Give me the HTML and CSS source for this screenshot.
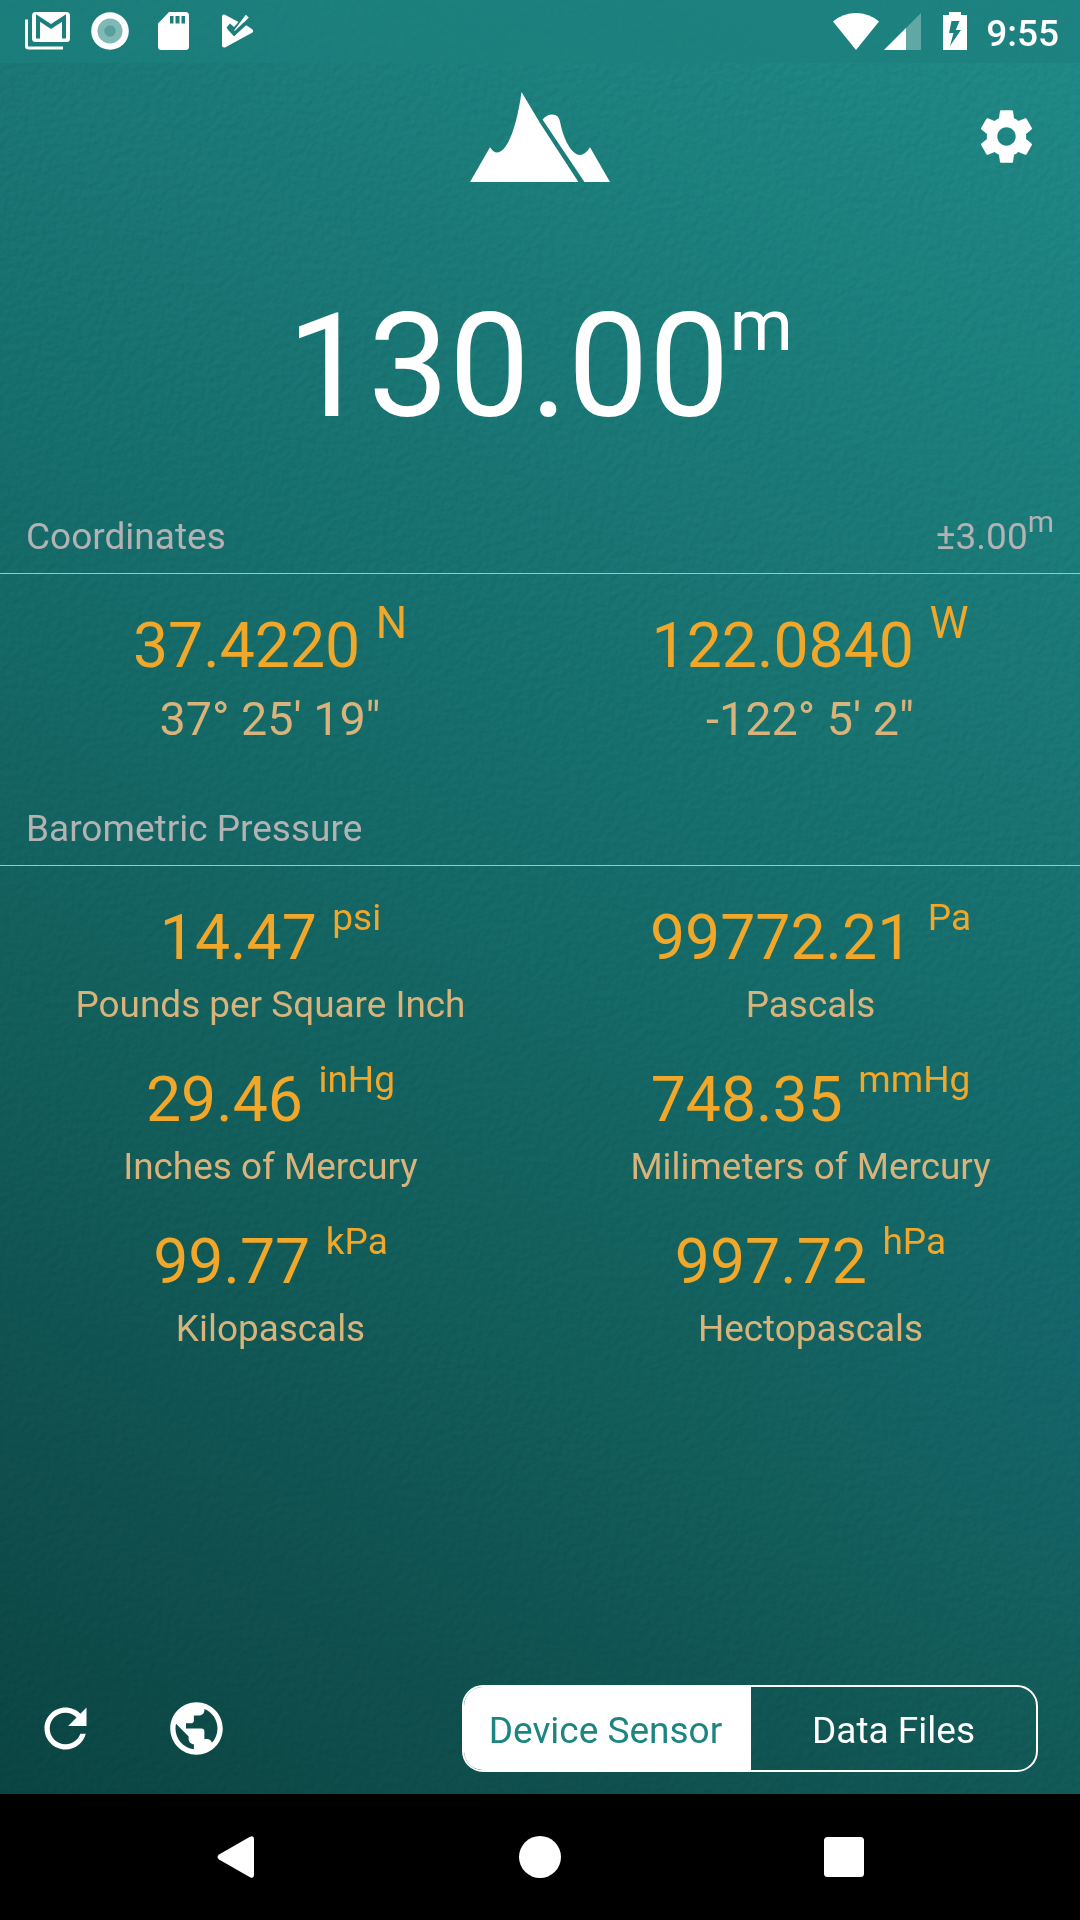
FILE: index.html
```html
<!DOCTYPE html>
<html lang="en">

<head>
    <meta charset="utf-8">
    <title>Altimeter</title>
    <link rel="stylesheet" href="styles.css">
</head>

<body>
    <div class="screen">
        <!-- paper grain over the gradient -->
        <svg class="grain" width="1080" height="1794">
            <filter id="paper" x="0" y="0" width="100%" height="100%" color-interpolation-filters="sRGB">
                <feTurbulence type="fractalNoise" baseFrequency="0.15" numOctaves="2" seed="4" result="noise" />
                <feDiffuseLighting in="noise" surfaceScale="1.4" diffuseConstant="0.72" lighting-color="#ffffff">
                    <feDistantLight azimuth="235" elevation="44" />
                </feDiffuseLighting>
            </filter>
            <rect width="1080" height="1794" filter="url(#paper)" />
        </svg>

        <div class="status-bar">
            <div class="status-left">
                <svg class="icon-mail" width="45" height="38" viewBox="0 0 45 38">
                    <path fill="none" stroke="#fff" stroke-width="3" d="M1.5 7.5V34a2 2 0 0 0 2 2H38" />
                    <rect x="7" y="0" width="38" height="30" rx="3.5" fill="#fff" />
                    <path fill="none" stroke="#1d7f7c" stroke-width="4" d="M13 26.500V6L26 14.500L39 6V26.500" />
                </svg>
                <svg class="icon-circle" width="38" height="38" viewBox="0 0 38 38">
                    <circle cx="19" cy="19" r="18.800" fill="#fff" />
                    <circle cx="19" cy="19" r="12.500" fill="#7fb8b5" />
                    <circle cx="19" cy="19" r="5.700" fill="#57a09c" />
                </svg>
                <svg class="icon-sd" width="31" height="38" viewBox="0 0 31 38">
                    <path fill="#fff" fill-rule="evenodd" d="M11 0H27.500A3.500 3.500 0 0 1 31 3.500V34.500A3.500 3.500 0 0 1 27.500 38H3.500A3.500 3.500 0 0 1 0 34.500V11.500ZM12 4V11.500H15.500V4ZM17.500 4V11.500H21.500V4ZM23.500 4V11.500H27V4Z" />
                </svg>
                <svg class="icon-play" width="32" height="34" viewBox="0 0 32 34">
                    <path fill="#fff" d="M0 2.500Q0 0 2.500 .5L16.500 8L12 13L8 9.500L4.500 13.500L12 22L24 11L30.500 15.500Q32 17 30.500 18.500L3 33.500Q0 34 0 31.500Z" />
                    <path fill="#fff" d="M12 16.500L23.800 .8L26.800 3.500L13.500 17.500Z" />
                    <path fill="none" stroke="#1d7f7c" stroke-width="3.500" d="M6.500 13.800L12.200 19.800L23.500 9.200" />
                </svg>
            </div>
            <div class="status-right">
                <svg class="icon-wifi" width="46" height="37" viewBox="0 0 46 37">
                    <path fill="#fff" d="M0 8.500Q10 0 23 0T46 8.500L23 37Z" />
                </svg>
                <svg class="icon-signal" width="37" height="37" viewBox="0 0 37 37">
                    <path fill="#fff" fill-opacity=".3" d="M37 0V37H0Z" />
                    <path fill="#fff" d="M22 15V37H0Z" />
                </svg>
                <svg class="icon-battery" width="24" height="38" viewBox="0 0 24 38">
                    <path fill="#fff" fill-rule="evenodd" d="M6 0H18V3H24V38H0V3H6ZM8.500 9L6 21H10.500L7 34L18 18H12.800L16.500 9Z" />
                </svg>
                <span class="clock">9:55</span>
            </div>
        </div>

        <header class="header">
            <svg class="logo" width="140" height="90" viewBox="0 0 140 90">
                <path fill="#fff" d="M0 90L20 55.300Q23.500 60.500 27 60.500C36 60.500 46 40 51.500 0L70 31L108.400 90Z" />
                <path fill="#fff" d="M72.500 27.500Q77 22.500 82 22.500C88 22.500 89.500 26 91 34C95 51 103 63 110 63Q115 63 120 55.300L140 90H114.500Z" />
            </svg>
            <svg class="settings" width="63" height="63" viewBox="0 0 24 24">
                <path fill="#fff" d="M19.430 12.980c.04-.32.07-.64.07-.98s-.03-.66-.07-.98l2.110-1.650c.19-.15.24-.42.12-.64l-2-3.460c-.12-.22-.39-.3-.61-.22l-2.490 1c-.52-.4-1.080-.73-1.690-.98l-.38-2.650C14.460 2.180 14.250 2 14 2h-4c-.25 0-.46.18-.49.42l-.38 2.650c-.61.25-1.170.59-1.690.98l-2.490-1c-.23-.09-.49 0-.61.22l-2 3.460c-.13.22-.07.49.12.64l2.110 1.650c-.04.32-.07.65-.07.98s.03.66.07.98l-2.110 1.650c-.19.15-.24.42-.12.64l2 3.460c.12.22.39.3.61.22l2.490-1c.52.4 1.080.73 1.690.98l.38 2.650c.03.24.24.42.49.42h4c.25 0 .46-.18.49-.42l.38-2.650c.61-.25 1.170-.59 1.690-.98l2.490 1c.23.09.49 0 .61-.22l2-3.460c.12-.22.07-.49-.12-.64l-2.110-1.650zM12 15.500c-1.930 0-3.500-1.570-3.500-3.500s1.570-3.500 3.500-3.500 3.500 1.570 3.500 3.500-1.570 3.500-3.500 3.500z" />
            </svg>
        </header>

        <div class="altitude">130.00<sup>m</sup></div>

        <section class="section">
            <div class="section-title">
                <span>Coordinates</span>
                <span class="accuracy">±3.00<sup>m</sup></span>
            </div>
            <div class="grid coordinates">
                <div class="cell">
                    <div class="value">37.4220 <sup>N</sup></div>
                    <div class="dms">37° 25' 19"</div>
                </div>
                <div class="cell">
                    <div class="value">122.0840 <sup>W</sup></div>
                    <div class="dms">-122° 5' 2"</div>
                </div>
            </div>
        </section>

        <section class="section">
            <div class="section-title">
                <span>Barometric Pressure</span>
            </div>
            <div class="grid pressure">
                <div class="cell">
                    <div class="value">14.47 <sup>psi</sup></div>
                    <div class="label">Pounds per Square Inch</div>
                </div>
                <div class="cell">
                    <div class="value">99772.21 <sup>Pa</sup></div>
                    <div class="label">Pascals</div>
                </div>
                <div class="cell">
                    <div class="value">29.46 <sup>inHg</sup></div>
                    <div class="label">Inches of Mercury</div>
                </div>
                <div class="cell">
                    <div class="value">748.35 <sup>mmHg</sup></div>
                    <div class="label">Milimeters of Mercury</div>
                </div>
                <div class="cell">
                    <div class="value">99.77 <sup>kPa</sup></div>
                    <div class="label">Kilopascals</div>
                </div>
                <div class="cell">
                    <div class="value">997.72 <sup>hPa</sup></div>
                    <div class="label">Hectopascals</div>
                </div>
            </div>
        </section>

        <footer class="footer">
            <div class="actions">
                <svg width="63" height="63" viewBox="0 0 24 24">
                    <path fill="#fff" d="M17.650 6.350C16.200 4.900 14.210 4 12 4c-4.420 0-7.990 3.580-7.990 8s3.570 8 7.990 8c3.730 0 6.840-2.550 7.730-6h-2.080c-.82 2.330-3.040 4-5.650 4-3.310 0-6-2.690-6-6s2.690-6 6-6c1.660 0 3.140.69 4.220 1.780L13 11h7V4l-2.350 2.350z" />
                </svg>
                <svg width="63" height="63" viewBox="0 0 24 24">
                    <path fill="#fff" d="M12 2C6.480 2 2 6.480 2 12s4.480 10 10 10 10-4.480 10-10S17.520 2 12 2zm-1 17.930c-3.950-.49-7-3.850-7-7.930 0-.62.08-1.210.21-1.790L9 15v1c0 1.100.9 2 2 2v1.930zm6.900-2.540c-.26-.81-1-1.390-1.900-1.390h-1v-3c0-.55-.45-1-1-1H8v-2h2c.55 0 1-.45 1-1V7h2c1.100 0 2-.9 2-2v-.41c2.930 1.190 5 4.060 5 7.410 0 2.080-.8 3.970-2.100 5.390z" />
                </svg>
            </div>
            <div class="switch">
                <div class="option active">Device Sensor</div>
                <div class="option">Data Files</div>
            </div>
        </footer>
    </div>

    <nav class="nav-bar">
        <svg width="38" height="42" viewBox="0 0 38 42">
            <path fill="#fff" d="M2 18.500L33 .8Q37 -1 37 3V39Q37 43 33 41.200L2 23.500Q-1 21 2 18.500Z" />
        </svg>
        <svg width="42" height="42" viewBox="0 0 42 42">
            <circle cx="21" cy="21" r="21" fill="#fff" />
        </svg>
        <svg width="40" height="40" viewBox="0 0 40 40">
            <rect width="40" height="40" rx="3.500" fill="#fff" />
        </svg>
    </nav>
</body>

</html>
```
FILE: styles.css
```css
body {
    margin: 0;
    background-color: #000;
    font-family: Roboto, sans-serif;
    color: #fff;
}

svg {
    display: block;
}

sup {
    line-height: 0;
    vertical-align: baseline;
    position: relative;
}

.screen {
    position: relative;
    display: flex;
    flex-direction: column;
    width: 1080px;
    height: 1794px;
    background:
        radial-gradient(circle at 1100px 1360px, rgba(20, 100, 115, 0.35), rgba(20, 100, 115, 0) 400px),
        linear-gradient(211deg, #208986 0%, #1c807d 16%, #197674 30%, #146967 50%, #125d5a 68%, #0f514f 83%, #0a4442 100%);
}

.grain {
    position: absolute;
    top: 0;
    left: 0;
    mix-blend-mode: overlay;
    opacity: 0.1;
}

/* status bar */
.status-bar {
    position: relative;
    display: flex;
    justify-content: space-between;
    height: 63px;
    background: rgba(29, 128, 125, 0.7);
}

.status-left {
    display: flex;
    align-items: flex-start;
    padding: 12px 0 0 25px;
}

.icon-circle {
    margin-left: 21px;
    overflow: visible;
}

.icon-sd {
    margin-left: 29px;
}

.icon-play {
    margin: 2px 0 0 33px;
}

.status-right {
    display: flex;
    align-items: flex-start;
    padding: 13px 21px 0 0;
}

.icon-signal {
    margin-left: 5px;
}

.icon-battery {
    margin: -1px 0 0 22px;
}

.clock {
    margin: -1px 0 0 19px;
    font-size: 37px;
    font-weight: 500;
    line-height: 43px;
}

/* header */
.header {
    position: relative;
    display: flex;
    justify-content: flex-end;
    height: 217px;
}

.logo {
    position: absolute;
    top: 29px;
    left: 470px;
}

.settings {
    margin: 42px 42px 0 0;
}

.altitude {
    position: relative;
    height: 219px;
    padding-top: 2px;
    font-size: 144px;
    line-height: 170px;
    text-align: center;
}

.altitude sup {
    top: -66px;
    font-size: 72px;
}

/* sections */
.section {
    position: relative;
    height: 292px;
}

.section-title {
    display: flex;
    justify-content: space-between;
    height: 72px;
    padding: 0 26px;
    border-bottom: 1px solid #b5bdbc;
    font-size: 37px;
    line-height: 72px;
    color: #b3b3b3;
}

.accuracy sup {
    top: -17px;
    font-size: 30px;
}

.grid {
    display: grid;
    grid-template-columns: 1fr 1fr;
    padding-top: 35px;
}

.cell {
    height: 162px;
    text-align: center;
}

.value {
    height: 74px;
    font-size: 62.5px;
    line-height: 74px;
    color: #f1a729;
}

.value sup {
    top: -29px;
    font-size: 37px;
}

.pressure .cell {
    padding-left: 1px;
}

.coordinates .value sup {
    font-size: 44px;
}

.dms {
    font-size: 46.7px;
    line-height: 56px;
    padding-top: 8px;
    color: #d8b37b;
}

.label {
    font-size: 36.9px;
    line-height: 44px;
    padding-top: 8px;
    color: #d8b37b;
}

/* footer */
.footer {
    position: relative;
    display: flex;
    justify-content: space-between;
    align-items: center;
    height: 87px;
    margin-top: auto;
    padding: 0 42px 22px 34px;
}

.actions {
    display: flex;
    gap: 68px;
}

.switch {
    box-sizing: border-box;
    display: flex;
    width: 576px;
    height: 87px;
    border: 2px solid #fff;
    border-radius: 21px;
    overflow: hidden;
}

.option {
    flex: 1;
    font-size: 37px;
    line-height: 87px;
    text-align: center;
}

.option.active {
    flex: 0 0 283px;
    padding-right: 4px;
    background: #fff;
    color: #1d8581;
}

/* android navigation */
.nav-bar {
    display: flex;
    justify-content: space-between;
    align-items: center;
    height: 126px;
    padding: 0 216px 0 217px;
}
```
